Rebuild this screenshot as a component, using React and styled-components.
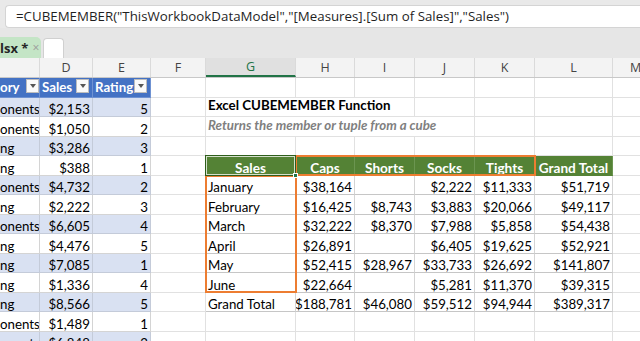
import React from 'react';
import styled, { createGlobalStyle, css } from 'styled-components';

const GlobalStyle = createGlobalStyle`
    html, body {
        margin: 0;
        padding: 0;
        background: #fff;
        overflow: hidden;
    }
    body {
        font-family: Lato, "Liberation Sans", sans-serif;
    }
`;

const COLS = [
    { key: 'C', w: 40 },
    { key: 'D', w: 53 },
    { key: 'E', w: 58 },
    { key: 'F', w: 55 },
    { key: 'G', w: 90 },
    { key: 'H', w: 59 },
    { key: 'I', w: 60 },
    { key: 'J', w: 60 },
    { key: 'K', w: 60 },
    { key: 'L', w: 78 },
    { key: 'M', w: 46 },
];
const TEMPLATE = COLS.map(c => c.w + 'px').join(' ');
const ROW_H = 19.5;
const colX = i => COLS.slice(0, i).reduce((s, c) => s + c.w, 0);

const leftRows = [
    ['onents', '$2,153', '5'],
    ['onents', '$1,050', '2'],
    ['ng', '$3,286', '3'],
    ['ng', '$388', '1'],
    ['onents', '$4,732', '2'],
    ['ng', '$2,222', '3'],
    ['onents', '$6,605', '4'],
    ['ng', '$4,476', '5'],
    ['ng', '$7,085', '1'],
    ['ng', '$1,336', '4'],
    ['ng', '$8,566', '5'],
    ['onents', '$1,489', '1'],
    ['onents', '$6,848', '2'],
];

const pivotHead = ['Sales', 'Caps', 'Shorts', 'Socks', 'Tights', 'Grand Total'];
const pivotRows = [
    ['January', '$38,164', '', '$2,222', '$11,333', '$51,719'],
    ['February', '$16,425', '$8,743', '$3,883', '$20,066', '$49,117'],
    ['March', '$32,222', '$8,370', '$7,988', '$5,858', '$54,438'],
    ['April', '$26,891', '', '$6,405', '$19,625', '$52,921'],
    ['May', '$52,415', '$28,967', '$33,733', '$26,692', '$141,807'],
    ['June', '$22,664', '', '$5,281', '$11,370', '$39,315'],
];
const grandTotal = ['Grand Total', '$188,781', '$46,080', '$59,512', '$94,944', '$389,317'];

const Page = styled.div`
    width: 640px;
    height: 341px;
    overflow: hidden;
    background: #fff;
`;

const FormulaBar = styled.div`
    height: 28px;
    box-sizing: border-box;
    padding: 5px 0 0 5px;
    background: #e9e9e9;
`;

const FormulaInput = styled.div`
    height: 23px;
    box-sizing: border-box;
    background: #fff;
    border: 1px solid #d4d4d4;
    border-right: none;
    border-radius: 4px 0 0 4px;
    padding-left: 10px;
    font-family: "Open Sans", sans-serif;
    font-size: 13.3px;
    line-height: 21px;
    color: #1f1f1f;
    white-space: nowrap;
`;

const TabBar = styled.div`
    height: 30px;
    display: flex;
    align-items: flex-end;
    gap: 2px;
    background: #e6e6e6;
`;

const FileTab = styled.div`
    width: 41px;
    height: 21px;
    box-sizing: border-box;
    display: flex;
    align-items: center;
    gap: 4px;
    background: #c4e5c6;
    border-radius: 0 5px 0 0;
    font-family: "Open Sans", sans-serif;
    font-size: 13px;
    font-weight: 700;
    color: #262626;
    overflow: hidden;
    white-space: nowrap;
`;

const TabClose = styled.span`
    font-weight: 400;
    color: #9a9a9a;
    font-size: 12px;
`;

const NewTab = styled.div`
    width: 21px;
    height: 20px;
    box-sizing: border-box;
    background: #fff;
    border: 1px solid #d0d0d0;
    border-bottom: none;
    border-radius: 4px 4px 0 0;
`;

const ColHeaderRow = styled.div`
    display: grid;
    grid-template-columns: ${TEMPLATE};
    height: 20px;
    box-sizing: border-box;
    background: #f3f3f3;
    border-bottom: 1px solid #c8c8c8;
`;

const ColHeader = styled.div`
    display: flex;
    align-items: center;
    justify-content: center;
    border-right: 1px solid #dadada;
    font-family: "Open Sans", sans-serif;
    font-size: 12.5px;
    color: #444;
    overflow: hidden;
    ${p => p.$active && css`
        background: #e0e0e0;
        color: #217346;
        border-bottom: 2px solid #217346;
    `}
    ${p => p.$edge && css`
        justify-content: flex-start;
        & > span { margin-left: -8px; }
    `}
`;

const Sheet = styled.div`
    position: relative;
`;

const Row = styled.div`
    display: grid;
    grid-template-columns: ${TEMPLATE};
    height: ${ROW_H}px;
`;

const kinds = {
    blank: css``,
    plain: css`
        border-color: #d4d4d4;
    `,
    band: css`
        background: #d9e1f2;
        border-color: #c4cbd9;
    `,
    tblHead: css`
        background: #4472c4;
        color: #fff;
        font-weight: 700;
        border-color: #6f92d2;
        justify-content: space-between;
        align-items: center;
        padding-right: 3px;
    `,
    pivHead: css`
        background: #548235;
        color: #fff;
        font-weight: 700;
        font-size: 13.6px;
        border-color: #548235;
        border-right-color: #6b9550;
    `,
    piv: css`
        border-color: #c6c6c6;
        border-right-color: #d4d4d4;
    `,
    title: css`
        font-weight: 700;
        padding-bottom: 4px;
    `,
    subtitle: css`
        font-weight: 700;
        font-style: italic;
        color: #7f7f7f;
        padding-bottom: 4px;
    `,
};

const Cell = styled.div`
    box-sizing: border-box;
    display: flex;
    align-items: flex-end;
    justify-content: ${p => (p.$align === 'right' ? 'flex-end' : p.$align === 'center' ? 'center' : 'flex-start')};
    grid-column: span ${p => p.$span || 1};
    padding: 0 2px;
    border-right: 1px solid #e1e1e1;
    border-bottom: 1px solid #e1e1e1;
    font-size: 13.3px;
    line-height: 14px;
    color: #000;
    white-space: nowrap;
    overflow: hidden;
    ${p => kinds[p.$kind || 'blank']}
    ${p => p.$edge && css`
        padding-left: 0;
        padding-right: 0;
    `}
`;

const FilterButton = styled.span`
    width: 13px;
    height: 14px;
    flex: none;
    box-sizing: border-box;
    display: flex;
    align-items: center;
    justify-content: center;
    background: #fafafa;
    border: 1px solid #bdbdbd;
    margin-bottom: 2px;
    &::after {
        content: '';
        border-left: 3px solid transparent;
        border-right: 3px solid transparent;
        border-top: 4px solid #555;
    }
`;

const RangeBox = styled.div`
    position: absolute;
    left: ${p => p.$x}px;
    top: ${p => p.$y}px;
    width: ${p => p.$w}px;
    height: ${p => p.$h}px;
    box-sizing: border-box;
    border: 2px solid #ed7d31;
    pointer-events: none;
`;

const ActiveCell = styled.div`
    position: absolute;
    left: ${p => p.$x}px;
    top: ${p => p.$y}px;
    width: ${p => p.$w}px;
    height: ${p => p.$h}px;
    box-sizing: border-box;
    border: 1px solid #2e5e1c;
    box-shadow: inset 0 0 0 1px rgba(255, 255, 255, 0.75);
    pointer-events: none;
    &::after {
        content: '';
        position: absolute;
        right: -3px;
        bottom: -3px;
        width: 5px;
        height: 5px;
        box-sizing: border-box;
        background: #217346;
        border: 1px solid #fff;
    }
`;

const Blanks = ({ n }) => Array.from({ length: n }, (_, i) => <Cell key={i} />);

const LeftCells = ({ row, i }) => {
    const kind = i % 2 === 0 ? 'band' : 'plain';
    return (
        <>
            <Cell $kind={kind} $edge>{row[0]}</Cell>
            <Cell $kind={kind} $align="right">{row[1]}</Cell>
            <Cell $kind={kind} $align="right">{row[2]}</Cell>
        </>
    );
};

const PivotCells = ({ row, head }) =>
    row.map((v, j) => (
        <Cell
            key={j}
            $kind={head ? 'pivHead' : 'piv'}
            $align={head ? 'center' : j === 0 ? 'left' : 'right'}
        >
            {v}
        </Cell>
    ));

const rowY = r => r * ROW_H;

export default function App() {
    const right = (r) => {
        if (r === 1) return (<><Cell $kind="title" $span={3}>Excel CUBEMEMBER Function</Cell><Blanks n={4} /></>);
        if (r === 2) return (<><Cell $kind="subtitle" $span={4}>Returns the member or tuple from a cube</Cell><Blanks n={3} /></>);
        if (r === 4) return (<><PivotCells row={pivotHead} head /><Cell /></>);
        if (r >= 5 && r <= 10) return (<><PivotCells row={pivotRows[r - 5]} /><Cell /></>);
        if (r === 11) return (<><PivotCells row={grandTotal} /><Cell /></>);
        return <Blanks n={7} />;
    };

    const rows = Array.from({ length: 14 }, (_, r) => r);

    return (
        <Page>
            <GlobalStyle />
            <FormulaBar>
                <FormulaInput>=CUBEMEMBER("ThisWorkbookDataModel","[Measures].[Sum of Sales]","Sales")</FormulaInput>
            </FormulaBar>
            <TabBar>
                <FileTab>lsx *<TabClose>×</TabClose></FileTab>
                <NewTab />
            </TabBar>
            <ColHeaderRow>
                {COLS.map(c => (
                    <ColHeader key={c.key} $active={c.key === 'G'} $edge={c.key === 'C'}>
                        <span>{c.key}</span>
                    </ColHeader>
                ))}
            </ColHeaderRow>
            <Sheet>
                {rows.map(r => (
                    <Row key={r}>
                        {r === 0 ? (
                            <>
                                <Cell $kind="tblHead" $edge>ory<FilterButton /></Cell>
                                <Cell $kind="tblHead">Sales<FilterButton /></Cell>
                                <Cell $kind="tblHead">Rating<FilterButton /></Cell>
                            </>
                        ) : (
                            <LeftCells row={leftRows[r - 1]} i={r - 1} />
                        )}
                        <Cell />
                        {right(r)}
                    </Row>
                ))}
                <RangeBox $x={colX(5) - 1} $y={rowY(4) - 1} $w={colX(9) - colX(5) + 2} $h={ROW_H + 1} />
                <RangeBox $x={colX(4) - 1} $y={rowY(5) - 1} $w={colX(5) - colX(4) + 2} $h={ROW_H * 6 + 1} />
                <ActiveCell $x={colX(4) - 1} $y={rowY(4) - 1} $w={colX(5) - colX(4) + 1} $h={ROW_H + 1} />
            </Sheet>
        </Page>
    );
}
